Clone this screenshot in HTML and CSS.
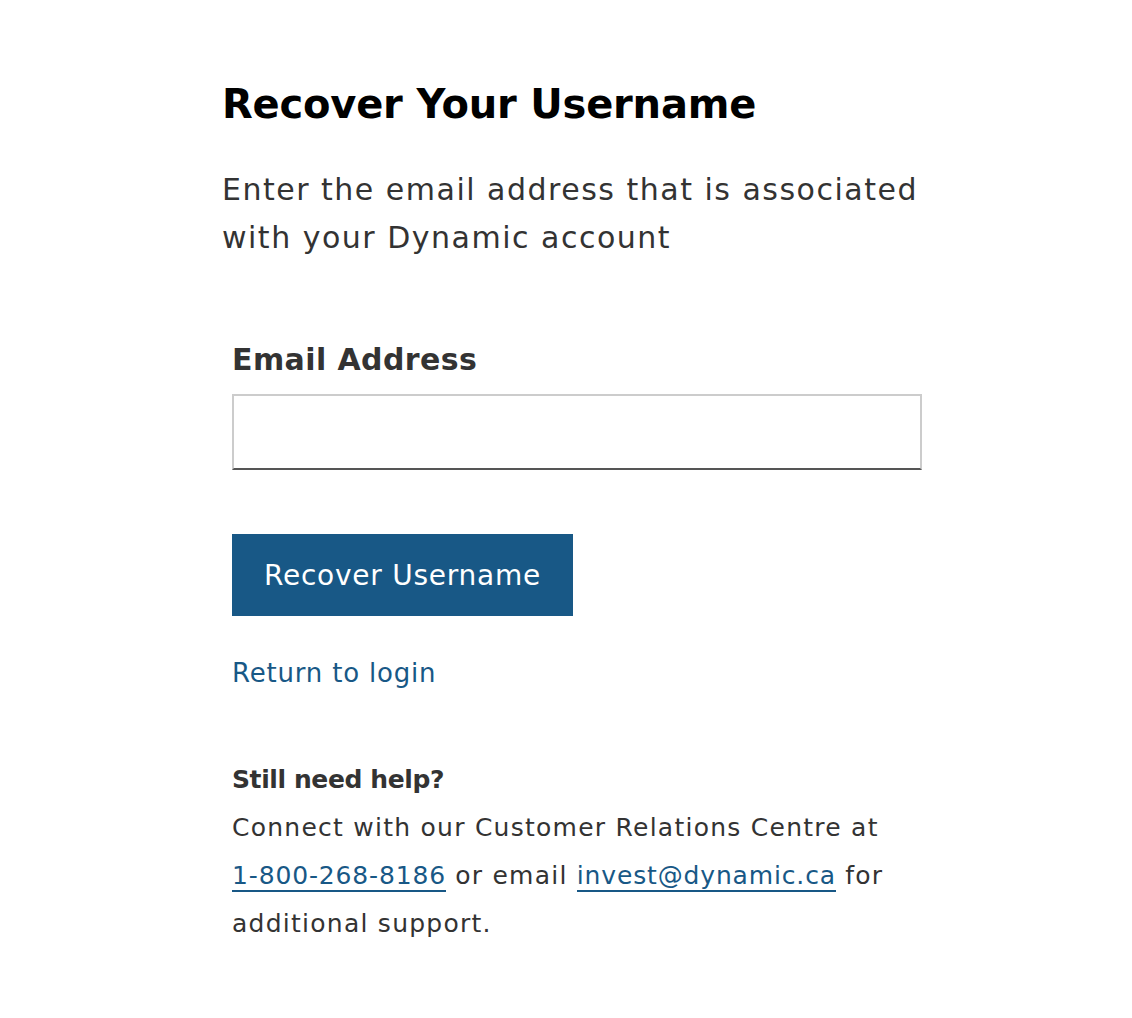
FILE: index.html
```html
<!DOCTYPE html>
<html>
<head>
    <title>Recover Your Username</title>
    <link rel="stylesheet" href="styles.css">
</head>
<body>
    <div class="recover-container">
        <h1>Recover Your Username</h1>
        <p class="intro">Enter the email address that is associated with your Dynamic account</p>

        <form id="recover-form" class="recover-form">
            <div class="form-group">
                <label for="email">Email Address</label>
                <input type="email" id="email" name="email" />
            </div>

            <button type="submit" class="btn btn-primary">Recover Username</button>

            <a href="#" class="return-link">Return to login</a>
        </form>

        <div class="help">
            <h2>Still need help?</h2>
            <p>Connect with our Customer Relations Centre at <a href="tel:18002688186">1-800-268-8186</a> or email <a href="mailto:invest@dynamic.ca">invest@dynamic.ca</a> for additional support.</p>
        </div>
    </div>
</body>
</html>
```

FILE: styles.css
```css
body {
    margin: 0;
    background: white;
    font-family: "DejaVu Sans", Arial, sans-serif;
    color: #333;
}
.recover-container {
    width: 700px;
    padding: 76px 0 0 222px;
}
h1 {
    margin: 0;
    font-size: 40px;
    line-height: 56px;
    font-weight: 700;
    letter-spacing: -0.2px;
    color: #000;
}
.intro {
    margin: 34px 0 0;
    font-size: 30px;
    line-height: 48px;
    letter-spacing: 1.5px;
}
.recover-form {
    padding: 0 0 0 10px;
    margin-top: 78px;
}
.form-group label {
    display: block;
    font-size: 30px;
    font-weight: 700;
    line-height: 40px;
    letter-spacing: 0.4px;
    margin-bottom: 14px;
}
.form-group input {
    display: block;
    width: 100%;
    height: 76px;
    box-sizing: border-box;
    border: 2px solid #ccc;
    border-bottom-color: #555;
    border-radius: 0;
    font-size: 26px;
    padding: 0 16px;
}
.btn {
    display: block;
    margin-top: 64px;
    height: 82px;
    padding: 0 32px;
    border: none;
    font-family: inherit;
    font-size: 28px;
    letter-spacing: 0.75px;
    cursor: pointer;
}
.btn-primary {
    background-color: #185886;
    color: white;
}
.return-link {
    display: inline-block;
    margin-top: 40px;
    font-size: 26px;
    line-height: 34px;
    letter-spacing: 0.8px;
    color: #185886;
    text-decoration: none;
}
.help {
    padding-left: 10px;
    margin-top: 66px;
}
.help h2 {
    margin: 0;
    font-size: 25px;
    line-height: 48px;
    font-weight: 700;
    letter-spacing: -0.4px;
}
.help p {
    margin: 0;
    font-size: 25px;
    line-height: 48px;
    letter-spacing: 1.25px;
}
.help a {
    color: #185886;
    text-decoration: none;
    white-space: nowrap;
    letter-spacing: 0.85px;
    border-bottom: 2px solid #185886;
}
```
